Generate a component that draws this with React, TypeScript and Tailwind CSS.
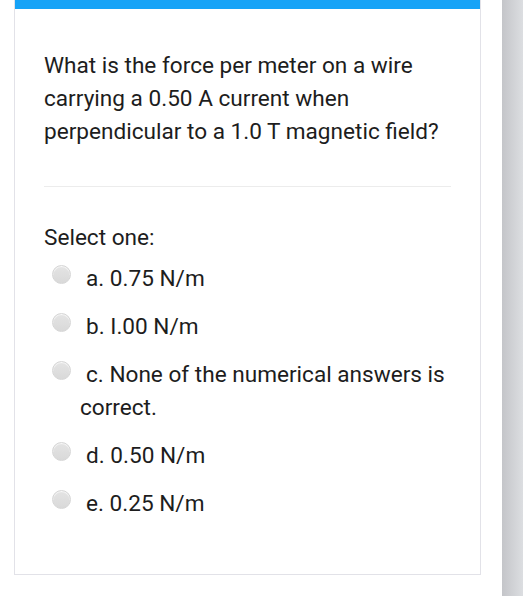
import React from 'react';

const options = [
  { id: 'a', label: 'a. 0.75 N/m' },
  { id: 'b', label: 'b. I.00 N/m' },
  { id: 'c', label: 'c. None of the numerical answers is correct.' },
  { id: 'd', label: 'd. 0.50 N/m' },
  { id: 'e', label: 'e. 0.25 N/m' },
];

function Radio() {
  return (
    <span className="mt-[3px] ml-[8px] h-[19px] w-[19px] shrink-0 rounded-full border border-[#d6d6d6] bg-gradient-to-b from-[#e4e4e4] to-[#d9d9d9] shadow-[inset_0_1px_1px_rgba(255,255,255,0.8)]" />
  );
}

export default function App() {
  return (
    <div
      className="flex min-h-[596px] w-[523px] bg-white text-[#1d1d1d]"
      style={{ fontFamily: 'Roboto, "Noto Sans", sans-serif' }}
    >
      {/* Main column */}
      <div className="flex-1 pl-[14px] pr-[21px]">
        <div className="h-[575px] border-x border-b border-[#e2e2e8] bg-white">
          <div className="h-[9px] bg-[#16a3f7]" />
          <div className="pl-[29px] pr-[29px]">
            <p className="pt-[40px] text-[22.6px] leading-[33px]">
              What is the force per meter on a wire carrying a 0.50 A current when perpendicular to a 1.0 T magnetic field?
            </p>
            <div className="mt-[38px] h-px bg-[#ececec]" />
            <p className="mt-[34px] text-[22.6px] leading-[33px]">Select one:</p>
            <div className="mt-[8px] flex flex-col gap-[15px]">
              {options.map((o) => (
                <label key={o.id} className="flex items-start gap-[9px] text-[22.6px] leading-[33px]">
                  <Radio />
                  <span className="indent-[6px]">{o.label}</span>
                </label>
              ))}
            </div>
          </div>
        </div>
      </div>
      {/* Scrollbar strip */}
      <div className="w-[21px] bg-gradient-to-r from-[#c4c5c9] to-[#dcdee1]" />
    </div>
  );
}
